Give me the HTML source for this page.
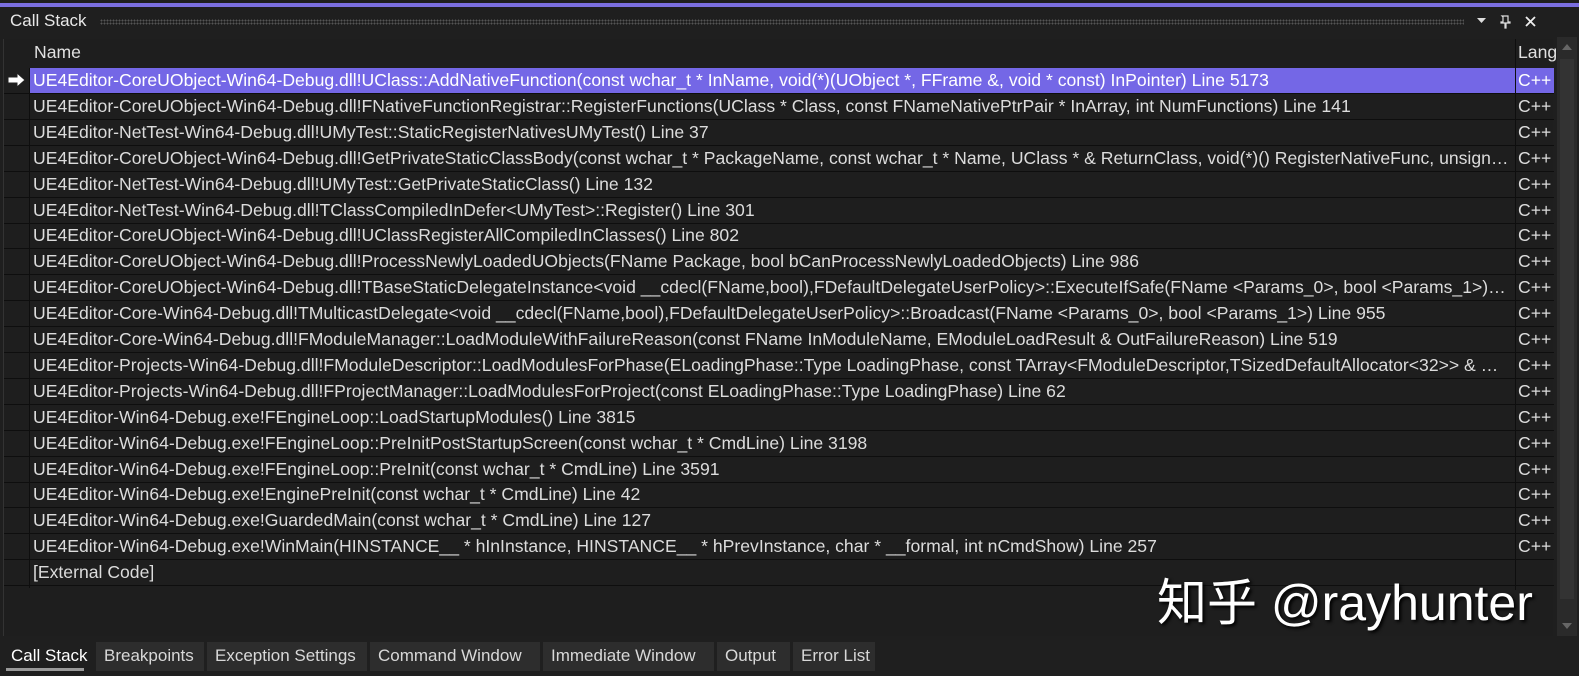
<!DOCTYPE html><html><head><meta charset="utf-8"><style>
*{margin:0;padding:0;box-sizing:border-box}
body{width:1579px;height:676px;background:#1f1f1f;overflow:hidden;position:relative;font-family:"Segoe UI","Liberation Sans",sans-serif;color:#dcdcdc;font-size:17.6px}
.top{position:absolute;left:0;top:3px;width:1579px;height:4px;background:#7b6fe0}
.title{position:absolute;left:10px;top:11px;font-size:17px;color:#e8e8e8}
.dots{position:absolute;left:100px;top:19px;width:1364px;height:6px;background-image:radial-gradient(#555 40%,transparent 45%);background-size:3px 3px}
.grid{position:absolute;left:3px;top:39px;width:1550px;height:597px;background:#1e1e1e;border-left:1px solid #333}
.hdr{position:absolute;left:0;top:0;width:1550px;height:29px}
.row{position:absolute;left:0;width:1550px;height:26px;border-bottom:1px solid #0e0e0e;white-space:nowrap}
.row .n{position:absolute;left:29px;top:2px;width:1476px;overflow:hidden;text-overflow:ellipsis}
.row .l{position:absolute;left:1514px;top:2px}
.vl{position:absolute;left:25px;top:29px;width:1px;height:520px;background:#0e0e0e}
.vl2{position:absolute;left:1511px;top:0;width:1px;height:551px;background:#0e0e0e;z-index:2}
.sel{background:#7467e6;color:#fff}
.scroll{position:absolute;left:1557px;top:37px;width:20px;height:599px;background:#2a2a2a}
.tabs{position:absolute;left:0;top:642px;height:29px;width:1579px}
.tab{position:absolute;top:0;height:29px;background:#2d2d2d;color:#d8d8d8;padding:4px 0 0 8px;font-size:17px;white-space:nowrap}
.wm{position:absolute;left:1157px;top:563px;font-size:50px;color:#fff;font-family:"Liberation Sans","Noto Sans CJK SC",sans-serif;text-shadow:2px 2px 3px #000}
</style></head><body>
<div class="top"></div>
<div class="title">Call Stack</div>
<div class="dots"></div>
<svg style="position:absolute;left:1474px;top:14px" width="80" height="16"><path d="M3 4h9l-4.5 5z" fill="#ddd"/><path d="M28 2h6v6h2v1h-4v5h-1V9h-4V8h2V3z" fill="none" stroke="#ddd" stroke-width="1.2"/><path d="M52 3l9 9M61 3l-9 9" stroke="#eee" stroke-width="1.8"/></svg>
<div class="grid">
<div class="hdr"><span style="position:absolute;left:30px;top:3px;color:#e0e0e0">Name</span><span style="position:absolute;left:1514px;top:3px;color:#e0e0e0">Lang</span></div>
<div class="vl2"></div>
<div id="rows"></div>
<div class="vl"></div>
</div>
<div class="scroll"><svg style="position:absolute;left:3px;top:5px" width="14" height="10"><path d="M2 8l5-6 5 6z" fill="#666"/></svg><div style="position:absolute;left:3px;top:22px;width:14px;height:540px;background:#333"></div><svg style="position:absolute;left:3px;top:584px" width="14" height="10"><path d="M2 2l5 6 5-6z" fill="#666"/></svg></div>
<div class="wm">知乎 @rayhunter</div>
<div class="tabs">
<div class="tab" style="left:2px;width:91px;background:#1f1f1f;color:#fff;padding-left:9px">Call Stack<div style="position:absolute;left:4px;bottom:0;width:78px;height:3px;background:#999"></div></div>
<div class="tab" style="left:96px;width:108px">Breakpoints</div>
<div class="tab" style="left:207px;width:160px">Exception Settings</div>
<div class="tab" style="left:370px;width:170px">Command Window</div>
<div class="tab" style="left:543px;width:171px">Immediate Window</div>
<div class="tab" style="left:717px;width:73px">Output</div>
<div class="tab" style="left:793px;width:82px">Error List</div>
</div>
<script>
var d=["UE4Editor-CoreUObject-Win64-Debug.dll!UClass::AddNativeFunction(const wchar_t * InName, void(*)(UObject *, FFrame &, void * const) InPointer) Line 5173",
"UE4Editor-CoreUObject-Win64-Debug.dll!FNativeFunctionRegistrar::RegisterFunctions(UClass * Class, const FNameNativePtrPair * InArray, int NumFunctions) Line 141",
"UE4Editor-NetTest-Win64-Debug.dll!UMyTest::StaticRegisterNativesUMyTest() Line 37",
"UE4Editor-CoreUObject-Win64-Debug.dll!GetPrivateStaticClassBody(const wchar_t * PackageName, const wchar_t * Name, UClass * & ReturnClass, void(*)() RegisterNativeFunc, unsigned int InSize) Line 2",
"UE4Editor-NetTest-Win64-Debug.dll!UMyTest::GetPrivateStaticClass() Line 132",
"UE4Editor-NetTest-Win64-Debug.dll!TClassCompiledInDefer<UMyTest>::Register() Line 301",
"UE4Editor-CoreUObject-Win64-Debug.dll!UClassRegisterAllCompiledInClasses() Line 802",
"UE4Editor-CoreUObject-Win64-Debug.dll!ProcessNewlyLoadedUObjects(FName Package, bool bCanProcessNewlyLoadedObjects) Line 986",
"UE4Editor-CoreUObject-Win64-Debug.dll!TBaseStaticDelegateInstance<void __cdecl(FName,bool),FDefaultDelegateUserPolicy>::ExecuteIfSafe(FName <Params_0>, bool <Params_1>) Line 731",
"UE4Editor-Core-Win64-Debug.dll!TMulticastDelegate<void __cdecl(FName,bool),FDefaultDelegateUserPolicy>::Broadcast(FName <Params_0>, bool <Params_1>) Line 955",
"UE4Editor-Core-Win64-Debug.dll!FModuleManager::LoadModuleWithFailureReason(const FName InModuleName, EModuleLoadResult & OutFailureReason) Line 519",
"UE4Editor-Projects-Win64-Debug.dll!FModuleDescriptor::LoadModulesForPhase(ELoadingPhase::Type LoadingPhase, const TArray<FModuleDescriptor,TSizedDefaultAllocator<32>> & Modules) Line 1",
"UE4Editor-Projects-Win64-Debug.dll!FProjectManager::LoadModulesForProject(const ELoadingPhase::Type LoadingPhase) Line 62",
"UE4Editor-Win64-Debug.exe!FEngineLoop::LoadStartupModules() Line 3815",
"UE4Editor-Win64-Debug.exe!FEngineLoop::PreInitPostStartupScreen(const wchar_t * CmdLine) Line 3198",
"UE4Editor-Win64-Debug.exe!FEngineLoop::PreInit(const wchar_t * CmdLine) Line 3591",
"UE4Editor-Win64-Debug.exe!EnginePreInit(const wchar_t * CmdLine) Line 42",
"UE4Editor-Win64-Debug.exe!GuardedMain(const wchar_t * CmdLine) Line 127",
"UE4Editor-Win64-Debug.exe!WinMain(HINSTANCE__ * hInInstance, HINSTANCE__ * hPrevInstance, char * __formal, int nCmdShow) Line 257",
"[External Code]"];
var h="";
d.forEach(function(t,i){var e=t.replace(/&/g,"&amp;").replace(/</g,"&lt;").replace(/>/g,"&gt;");
h+='<div class="row" style="top:'+(29+i*25.9)+'px"><div class="'+(i==0?'sel':'')+'" style="position:absolute;left:26px;top:0;width:1524px;height:25px"></div>'+(i==0?'<svg style="position:absolute;left:3px;top:4px" width="20" height="16"><path d="M1 5h9V1l8 7-8 7v-4H1z" fill="#fff" stroke="#222" stroke-width="1"/></svg>':'')+'<span class="n" style="'+(i==0?'color:#fff':'')+'">'+e+'</span>'+(i<19?'<span class="l" style="'+(i==0?'color:#fff':'')+'">C++</span>':'')+'</div>';});
document.getElementById("rows").innerHTML=h;
</script>
</body></html>
